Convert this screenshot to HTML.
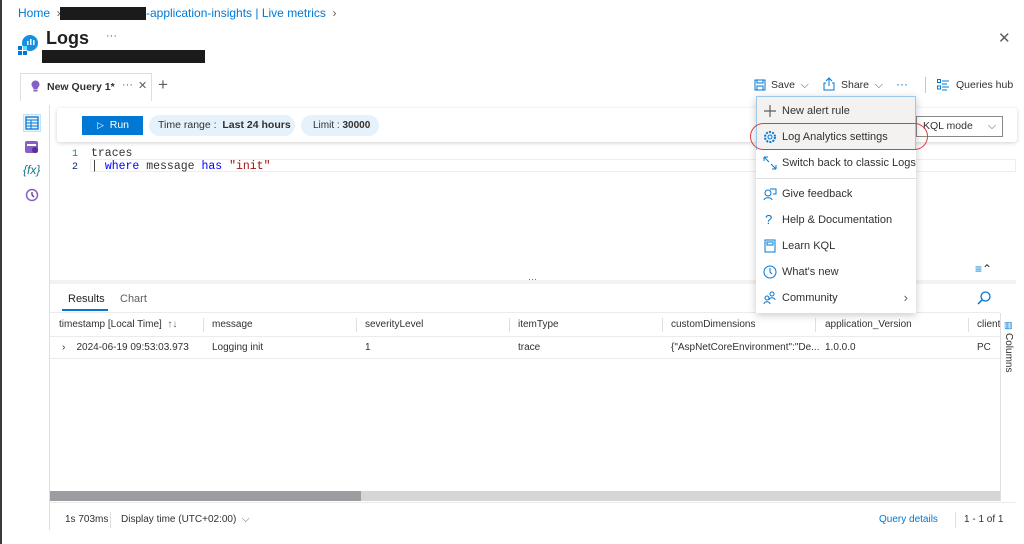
<!DOCTYPE html>
<html><head><meta charset="utf-8"><style>
*{box-sizing:border-box;margin:0;padding:0}
body{width:1024px;height:544px;position:relative;overflow:hidden;background:#fff;font-family:"Liberation Sans",sans-serif;font-size:11px;color:#323130}
div{white-space:nowrap}
.a{position:absolute;white-space:nowrap}
.blk{position:absolute;background:#1b1b1b}
.mono{font-family:"Liberation Mono",monospace;font-size:11.5px}
.mi{position:absolute;left:0;width:160px;height:26px;line-height:26px;padding-left:26px;font-size:11px;color:#323130}
.mi svg{position:absolute;left:7px;top:6px}
.col{position:absolute;top:313px;height:24px;line-height:24px;font-size:10px;color:#323130}
.sep{position:absolute;top:318px;width:1px;height:14px;background:#e1dfdd}
</style></head><body>
<div style="position:absolute;left:0;top:0;width:2px;height:544px;background:#3a3a3a"></div>
<div class="a" style="left:18px;top:6px;font-size:12px;color:#0078d4">Home <span style="color:#605e5c">&nbsp;›</span></div>
<div class="blk" style="left:60px;top:7px;width:86px;height:13px"></div>
<div class="a" style="left:146px;top:6px;font-size:12px;color:#0078d4">-application-insights | Live metrics <span style="color:#605e5c">&nbsp;›</span></div>
<svg class="a" style="left:17px;top:34px" width="22" height="22" viewBox="0 0 22 22"><circle cx="13" cy="9" r="8" fill="#1490df"/><rect x="10" y="7" width="1.5" height="4" fill="#fff"/><rect x="13" y="5" width="1.5" height="6" fill="#fff"/><rect x="16" y="6" width="1.5" height="5" fill="#fff"/><rect x="1" y="12" width="4" height="4" fill="#0078d4"/><rect x="6" y="12" width="4" height="4" fill="#50e6ff"/><rect x="1" y="17" width="4" height="4" fill="#0078d4"/><rect x="6" y="17" width="4" height="4" fill="#0078d4"/></svg>
<div class="a" style="left:46px;top:28px;font-size:18px;font-weight:bold;color:#201f1e">Logs</div>
<div class="a" style="left:106px;top:30px;color:#605e5c">···</div>
<div class="blk" style="left:42px;top:50px;width:163px;height:13px"></div>
<div class="a" style="left:998px;top:29px;font-size:15px;color:#605e5c">✕</div>
<!-- tab -->
<div style="position:absolute;left:20px;top:73px;width:132px;height:28px;border:1px solid #e1dfdd;border-bottom:none;background:#fff"></div>
<svg class="a" style="left:31px;top:80px" width="9" height="12" viewBox="0 0 9 12"><path d="M4.5 0.5a4 4 0 0 1 4 4c0 2-2 3-2 5h-4c0-2-2-3-2-5a4 4 0 0 1 4-4z" fill="#8661c5"/><rect x="2.5" y="10" width="4" height="1.5" fill="#8661c5"/></svg>
<div class="a" style="left:47px;top:81px;font-weight:bold;font-size:10.5px">New Query 1*</div>
<div class="a" style="left:122px;top:79px;color:#0078d4">···</div>
<div class="a" style="left:138px;top:79px;color:#605e5c">✕</div>
<div class="a" style="left:158px;top:75px;font-size:17px;color:#605e5c">+</div>
<!-- toolbar -->
<svg class="a" style="left:754px;top:79px" width="12" height="12" viewBox="0 0 12 12"><rect x="1" y="1" width="10" height="10" fill="none" stroke="#0078d4"/><rect x="3" y="1" width="6" height="3" fill="none" stroke="#0078d4"/><rect x="3" y="7" width="6" height="4" fill="none" stroke="#0078d4"/></svg>
<div class="a" style="left:771px;top:79px;font-size:10.5px">Save&nbsp; <span style="color:#605e5c">⌵</span></div>
<svg class="a" style="left:823px;top:77px" width="12" height="14" viewBox="0 0 12 14"><path d="M6 1v8M3 4l3-3 3 3M3 6H1v7h10V6H9" fill="none" stroke="#0078d4"/></svg>
<div class="a" style="left:841px;top:79px;font-size:10.5px">Share&nbsp; <span style="color:#605e5c">⌵</span></div>
<div class="a" style="left:896px;top:77px;color:#0078d4;font-size:12px">···</div>
<div style="position:absolute;left:925px;top:77px;width:1px;height:16px;background:#c8c6c4"></div>
<svg class="a" style="left:937px;top:79px" width="12" height="12" viewBox="0 0 12 12"><rect x="0.5" y="0.5" width="3" height="3" fill="none" stroke="#0078d4"/><rect x="0.5" y="7" width="3" height="3" fill="none" stroke="#0078d4"/><path d="M5 2h7M5 5h5M5 8h7M5 11h5" stroke="#0078d4"/></svg>
<div class="a" style="left:956px;top:79px;font-size:10.5px">Queries hub</div>
<!-- left icons -->
<svg class="a" style="left:23px;top:114px" width="18" height="18" viewBox="0 0 18 18"><rect x="0.5" y="0.5" width="17" height="17" fill="#eaf3fc" stroke="#c7e0f4"/><rect x="3" y="3" width="12" height="12" fill="none" stroke="#0078d4" stroke-width="1.3"/><path d="M3 6h12M3 9h12M3 12h12M8 6v9" stroke="#0078d4"/></svg>
<svg class="a" style="left:25px;top:140px" width="14" height="14" viewBox="0 0 14 14"><rect x="0" y="1" width="13" height="12" rx="2" fill="#8661c5"/><rect x="2" y="4" width="9" height="2" fill="#fff"/><circle cx="10" cy="10" r="3" fill="#5c2e91"/></svg>
<div class="a" style="left:23px;top:163px;font-size:12px;color:#0f7b8c;font-style:italic">{<i>fx</i>}</div>
<svg class="a" style="left:25px;top:188px" width="14" height="14" viewBox="0 0 14 14"><circle cx="7" cy="7" r="5.5" fill="none" stroke="#8661c5" stroke-width="1.5"/><path d="M7 4v3l2 2" stroke="#5c2e91" stroke-width="1.3" fill="none"/></svg>
<div style="position:absolute;left:49px;top:105px;width:1px;height:425px;background:#e1dfdd"></div>
<!-- query card -->
<div style="position:absolute;left:57px;top:108px;width:960px;height:34px;background:#fff;border-radius:3px;box-shadow:0 1px 4px rgba(0,0,0,.18)"></div>
<div style="position:absolute;left:82px;top:116px;width:61px;height:19px;background:#0078d4;color:#fff;font-size:10.5px;line-height:19px;padding-left:15px"><span style="font-size:9px">▷</span>&nbsp; Run</div>
<div style="position:absolute;left:149px;top:115px;width:146px;height:21px;border-radius:11px;background:#e5f1fb;line-height:21px;padding-left:9px;font-size:10.5px;color:#323130">Time range :&nbsp; <b>Last 24 hours</b></div>
<div style="position:absolute;left:301px;top:115px;width:78px;height:21px;border-radius:11px;background:#e5f1fb;line-height:21px;padding-left:12px;font-size:10px">Limit : <b>30000</b></div>
<div style="position:absolute;left:916px;top:116px;width:87px;height:21px;border:1px solid #8a8886;line-height:19px;padding-left:6px;font-size:10.5px;background:#fff">KQL mode<span style="position:absolute;right:6px;color:#605e5c">⌵</span></div>
<!-- editor -->
<div class="a mono" style="left:72px;top:149px;font-size:10px;color:#237893">1</div>
<div class="a mono" style="left:72px;top:162px;font-size:10px;color:#0b216f">2</div>
<div style="position:absolute;left:90px;top:159px;width:926px;height:13px;border:1px solid #eee"></div>
<div class="a mono" style="left:91px;top:147px;color:#333">traces</div>
<div class="a mono" style="left:91px;top:160px;color:#333">| <span style="color:#0000ff">where</span> message <span style="color:#0000ff">has</span> <span style="color:#a31515">"init"</span></div>
<div class="a" style="left:975px;top:262px;color:#0078d4;font-size:12px">≡<span style="color:#323130">⌃</span></div>
<div style="position:absolute;left:50px;top:280px;width:966px;height:4px;background:#f3f2f1"></div>
<div class="a" style="left:528px;top:274px;color:#605e5c;font-size:9px">···</div>
<!-- results -->
<div class="a" style="left:68px;top:293px;font-size:11px;color:#201f1e">Results</div>
<div style="position:absolute;left:62px;top:309px;width:46px;height:2px;background:#0078d4"></div>
<div class="a" style="left:120px;top:293px;font-size:11px;color:#605e5c">Chart</div>
<svg class="a" style="left:977px;top:291px" width="14" height="14" viewBox="0 0 14 14"><circle cx="8.5" cy="5.5" r="4.5" fill="none" stroke="#0078d4" stroke-width="1.3"/><path d="M5.3 8.7L1 13" stroke="#0078d4" stroke-width="1.5"/></svg>
<div style="position:absolute;left:50px;top:312px;width:950px;height:1px;background:#edebe9"></div>
<div style="position:absolute;left:50px;top:336px;width:950px;height:1px;background:#edebe9"></div>
<div style="position:absolute;left:50px;top:358px;width:950px;height:1px;background:#edebe9"></div>
<div class="col" style="left:59px">timestamp [Local Time] &nbsp;<span style="color:#605e5c">↑↓</span></div>
<div class="col" style="left:212px">message</div>
<div class="col" style="left:365px">severityLevel</div>
<div class="col" style="left:518px">itemType</div>
<div class="col" style="left:671px">customDimensions</div>
<div class="col" style="left:825px">application_Version</div>
<div class="col" style="left:977px;width:23px;overflow:hidden">client</div>
<div class="sep" style="left:203px"></div><div class="sep" style="left:356px"></div><div class="sep" style="left:509px"></div><div class="sep" style="left:662px"></div><div class="sep" style="left:815px"></div><div class="sep" style="left:968px"></div>
<div class="col" style="top:337px;height:21px;line-height:21px;left:62px">›&nbsp;&nbsp;&nbsp; 2024-06-19 09:53:03.973</div>
<div class="col" style="top:337px;height:21px;line-height:21px;left:212px">Logging init</div>
<div class="col" style="top:337px;height:21px;line-height:21px;left:365px">1</div>
<div class="col" style="top:337px;height:21px;line-height:21px;left:518px">trace</div>
<div class="col" style="top:337px;height:21px;line-height:21px;left:671px">{"AspNetCoreEnvironment":"De...</div>
<div class="col" style="top:337px;height:21px;line-height:21px;left:825px">1.0.0.0</div>
<div class="col" style="top:337px;height:21px;line-height:21px;left:977px">PC</div>
<div style="position:absolute;left:1000px;top:313px;width:1px;height:188px;background:#e1dfdd"></div>
<div class="a" style="left:1004px;top:320px;color:#0078d4;font-size:9px">▥</div>
<div class="a" style="left:1003px;top:333px;font-size:10px;writing-mode:vertical-rl">Columns</div>
<div style="position:absolute;left:50px;top:491px;width:950px;height:10px;background:#d6d6d6"></div>
<div style="position:absolute;left:50px;top:491px;width:311px;height:10px;background:#9b9da0"></div>
<div style="position:absolute;left:50px;top:502px;width:966px;height:1px;background:#edebe9"></div>
<!-- footer -->
<div class="a" style="left:65px;top:514px;font-size:10px">1s 703ms</div>
<div style="position:absolute;left:110px;top:512px;width:1px;height:16px;background:#e1dfdd"></div>
<div class="a" style="left:121px;top:514px;font-size:10px;color:#323130">Display time (UTC+02:00)&nbsp; <span style="color:#605e5c">⌵</span></div>
<div class="a" style="left:879px;top:514px;font-size:10px;color:#0078d4">Query details</div>
<div style="position:absolute;left:955px;top:512px;width:1px;height:16px;background:#e1dfdd"></div>
<div class="a" style="left:964px;top:514px;font-size:10px">1 - 1 of 1</div>
<!-- menu -->
<div style="position:absolute;left:756px;top:96px;width:160px;height:217px;background:#fff;box-shadow:0 2px 8px rgba(0,0,0,.22)">
 <div style="position:absolute;left:0;top:0;width:160px;height:54px;background:#f3f2f1;border:1px solid #9cc8ec;border-bottom:none"></div>
 <div class="mi" style="top:2px"><svg width="14" height="14" viewBox="0 0 14 14"><path d="M7 1v12M1 7h12" stroke="#605e5c" stroke-width="1.2"/></svg>New alert rule</div>
 <div class="mi" style="top:28px"><svg width="14" height="14" viewBox="0 0 14 14"><circle cx="7" cy="7" r="5" fill="none" stroke="#0078d4" stroke-dasharray="2 1.2" stroke-width="2"/><circle cx="7" cy="7" r="2" fill="none" stroke="#0078d4"/></svg>Log Analytics settings</div>
 <div class="mi" style="top:54px"><svg width="14" height="14" viewBox="0 0 14 14"><path d="M1 1l5 5M1 1v4M1 1h4M13 13L8 8M13 13v-4M13 13h-4" stroke="#0078d4" fill="none"/></svg>Switch back to classic Logs</div>
 <div style="position:absolute;left:0;top:82px;width:160px;height:1px;background:#e1dfdd"></div>
 <div class="mi" style="top:85px"><svg width="14" height="14" viewBox="0 0 14 14"><circle cx="5" cy="6" r="3" fill="none" stroke="#0078d4"/><path d="M1 13c0-3 8-3 8 0M7 2h6v5h-3" stroke="#0078d4" fill="none"/></svg>Give feedback</div>
 <div class="mi" style="top:111px"><span style="position:absolute;left:9px;color:#0078d4;font-size:13px">?</span>Help &amp; Documentation</div>
 <div class="mi" style="top:137px"><svg width="14" height="14" viewBox="0 0 14 14"><rect x="2" y="1" width="10" height="12" fill="none" stroke="#0078d4"/><rect x="4" y="3" width="6" height="3" fill="none" stroke="#0078d4"/></svg>Learn KQL</div>
 <div class="mi" style="top:163px"><svg width="14" height="14" viewBox="0 0 14 14"><circle cx="7" cy="7" r="6" fill="none" stroke="#0078d4"/><path d="M7 3v4l2 2" stroke="#0078d4" fill="none"/></svg>What's new</div>
 <div class="mi" style="top:189px"><svg width="14" height="14" viewBox="0 0 14 14"><circle cx="4" cy="7" r="2" fill="none" stroke="#0078d4"/><circle cx="9" cy="3" r="2" fill="none" stroke="#0078d4"/><path d="M1 13c0-3 6-3 6 0M6 9c0-3 6-3 6 0" stroke="#0078d4" fill="none"/></svg>Community<span style="position:absolute;right:8px;color:#605e5c;font-size:13px">›</span></div>
</div>
<div style="position:absolute;left:750px;top:123px;width:178px;height:27px;border:1.3px solid #e0393e;border-radius:14px"></div>
</body></html>
